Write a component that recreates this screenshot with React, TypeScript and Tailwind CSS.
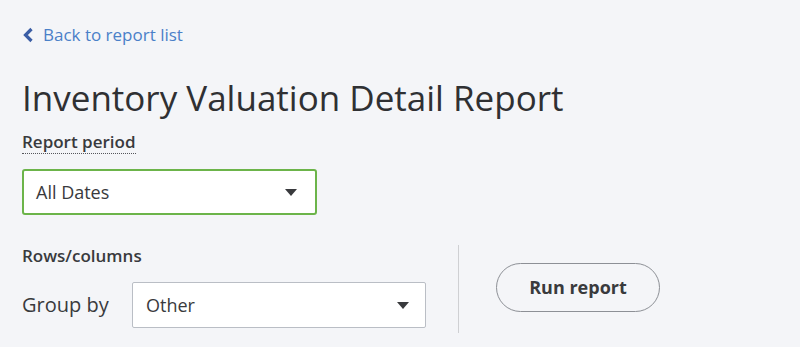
const Caret = () => (
  <svg width="12" height="7" viewBox="0 0 12 7" className="shrink-0">
    <path d="M0 0h12L6 7z" fill="#393a3d" />
  </svg>
);

const BackChevron = () => (
  <svg width="12" height="16" viewBox="0 0 12 16" className="mr-[9px] shrink-0">
    <path d="M9.5 2 3.5 8l6 6" fill="none" stroke="#3b5ea5" strokeWidth="3.2" />
  </svg>
);

const App = () => {
  return (
    <div
      className="w-[800px] h-[347px] overflow-hidden bg-[#f4f5f8] pl-[22px] text-[#393a3d]"
      style={{ fontFamily: "'Open Sans', 'Noto Sans', sans-serif" }}
    >
      <a className="flex items-center pt-[24px] text-[17px] leading-[22px] text-[#4a80c8] cursor-pointer">
        <BackChevron />
        <span>Back to report list</span>
      </a>

      <h1 className="mt-[32px] text-[35px] leading-[40px] text-[#2f3033]">
        Inventory Valuation Detail Report
      </h1>

      <div className="mt-[12px]">
        <span className="text-[17px] font-semibold leading-[22px] border-b-[1.5px] border-dotted border-[#55565b]">
          Report period
        </span>
      </div>

      <div className="mt-[15px] w-[295px] h-[46px] bg-white border-2 border-[#6cb44a] rounded-[3px] flex items-center justify-between pl-[12px] pr-[18px]">
        <span className="text-[18px]">All Dates</span>
        <Caret />
      </div>

      <div className="mt-[30px] flex">
        <div className="w-[437px] border-r border-[#cfd0d3] pb-[5px]">
          <div className="text-[17px] font-semibold leading-[22px]">Rows/columns</div>
          <div className="mt-[15px] flex items-center">
            <span className="text-[20px] w-[110px]">Group by</span>
            <div className="w-[294px] h-[46px] bg-white border border-[#babec5] rounded-[2px] flex items-center justify-between pl-[13px] pr-[16px]">
              <span className="text-[18px]">Other</span>
              <Caret />
            </div>
          </div>
        </div>
        <div className="pl-[37px] pt-[18px]">
          <button className="w-[164px] h-[49px] rounded-full border-[1.5px] border-[#8d9096] text-[18px] font-bold text-[#393a3d]">
            Run report
          </button>
        </div>
      </div>
    </div>
  );
};

export default App;
